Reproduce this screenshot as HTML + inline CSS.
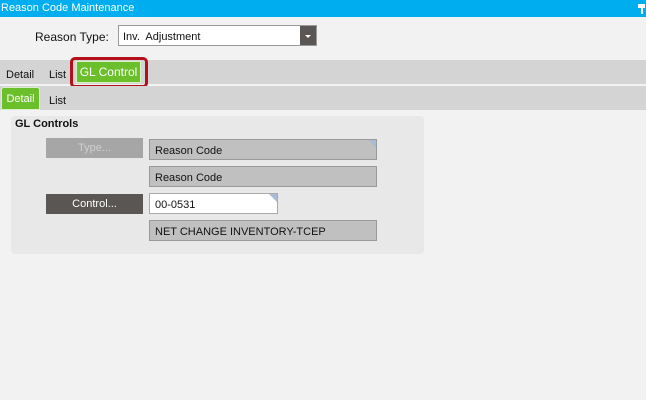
<!DOCTYPE html>
<html><head><style>
*{margin:0;padding:0;box-sizing:border-box}
body{width:646px;height:400px;background:#f2f2f3;font-family:"Liberation Sans",sans-serif;font-size:11px;color:#111;position:relative;overflow:hidden}
.a{position:absolute}
.fld{position:absolute;background:#c0c0c0;border:1px solid #9a9a9a;padding-left:5px;padding-top:2px;line-height:18px;font-size:11px}
.corner{position:absolute;right:0;top:0;width:0;height:0;border-left:8px solid transparent;border-top:8px solid #a8bcd8}
</style></head><body>
<div class="a" style="left:0;top:0;width:646px;height:17px;background:#00aeef;color:#fff;font-size:11px;line-height:17px;padding-left:1px">Reason Code Maintenance</div>
<div class="a" style="left:638px;top:4px;width:7px;height:4px;background:#fff"></div>
<div class="a" style="left:641px;top:8px;width:2px;height:6px;background:#fff"></div>
<div class="a" style="left:35px;top:30px;font-size:12px">Reason Type:</div>
<div class="a" style="left:118px;top:25px;width:199px;height:21px;background:#fff;border:1px solid #999;padding-left:4px;padding-top:2px;line-height:18px;font-size:11px">Inv.&nbsp; Adjustment</div>
<div class="a" style="left:300px;top:26px;width:16px;height:19px;background:#595654"></div>
<div class="a" style="left:305px;top:35px;width:0;height:0;border-left:3px solid transparent;border-right:3px solid transparent;border-top:3px solid #fff"></div>
<div class="a" style="left:0;top:60px;width:646px;height:24px;background:#d4d4d4"></div>
<div class="a" style="left:6px;top:69px">Detail</div>
<div class="a" style="left:49px;top:69px">List</div>
<div class="a" style="left:70px;top:57px;width:78px;height:31px;border:3px solid #b3101a;border-radius:5px"></div>
<div class="a" style="left:76px;top:61px;width:65px;height:22px;background:#6abf2a;border:1px solid #d8f0c8;color:#fff;font-size:12px;line-height:20px;text-align:center">GL Control</div>
<div class="a" style="left:0;top:86px;width:646px;height:24px;background:#d4d4d4"></div>
<div class="a" style="left:1px;top:87px;width:39px;height:23px;background:#6abf2a;border:1px solid #d8f0c8;border-radius:3px 3px 0 0;color:#fff;font-size:11px;line-height:22px;text-align:center">Detail</div>
<div class="a" style="left:49px;top:95px">List</div>
<div class="a" style="left:11px;top:116px;width:413px;height:138px;background:#e8e8e8;border-radius:4px"></div>
<div class="a" style="left:15px;top:118px;font-weight:bold;font-size:11px">GL Controls</div>
<div class="a" style="left:46px;top:138px;width:97px;height:20px;background:#a6a6a6;color:#cfcfcf;text-align:center;line-height:20px;font-size:11px">Type...</div>
<div class="fld" style="left:149px;top:139px;width:228px;height:21px">Reason Code<div class="corner"></div></div>
<div class="fld" style="left:149px;top:166px;width:228px;height:21px">Reason Code</div>
<div class="a" style="left:46px;top:194px;width:97px;height:20px;background:#595654;color:#fff;text-align:center;line-height:20px">Control...</div>
<div class="fld" style="left:149px;top:193px;width:129px;height:21px;background:#fff;border-color:#aaa">00-0531<div class="corner"></div></div>
<div class="fld" style="left:149px;top:220px;width:228px;height:21px">NET CHANGE INVENTORY-TCEP</div>
</body></html>
